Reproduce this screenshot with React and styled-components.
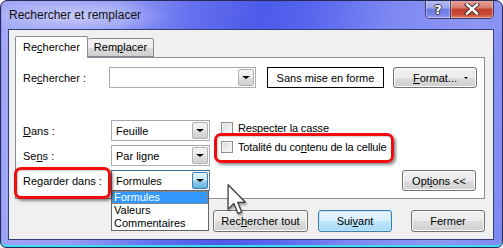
import React from "react";
import styled, { createGlobalStyle } from "styled-components";

const GlobalStyle = createGlobalStyle`
  html, body { margin: 0; padding: 0; background: #ffffff; }
  body { font-family: "Liberation Sans", Arial, sans-serif; }
  * { box-sizing: border-box; }
`;

const Window = styled.div`
  position: relative;
  width: 503px;
  height: 248px;
  border: 1px solid #262a55;
  border-radius: 7px 7px 6px 6px;
  background:
    radial-gradient(ellipse 95px 18px at 75px 15px, rgba(255,255,255,0.45), rgba(255,255,255,0) 100%),
    linear-gradient(100deg, #a3a9f5 0%, #939bf4 22%, #6571ef 35%, #4b5ae9 48%, #5867ee 58%, #7d88f2 72%, #8e97f3 88%, #7e89f1 100%);
  box-shadow: inset 0 -2px 0 #3fdaf4, inset 1px 0 0 #8c96f6;
  display: flex;
  flex-direction: column;
  overflow: hidden;
`;

const TitleBar = styled.div`
  height: 28px;
  display: flex;
  align-items: flex-start;
  padding-left: 8px;
`;

const Title = styled.div`
  padding-top: 6px;
  line-height: 16px;
  font-size: 12px;
  color: #101010;
`;

const Controls = styled.div`
  margin-left: auto;
  margin-right: 8px;
  margin-top: -1px;
  display: flex;
  height: 19px;
  border: 1px solid #3a3f6a;
  border-top: none;
  border-radius: 0 0 5px 5px;
  overflow: hidden;
`;

const CtrlButton = styled.div`
  width: ${(p) => p.$w}px;
  height: 100%;
  display: flex;
  align-items: center;
  justify-content: center;
  background: ${(p) =>
    p.$close
      ? "linear-gradient(#e9a79c 0%, #d77a6c 45%, #c5402e 50%, #c84a36 80%, #e1806a 100%)"
      : "linear-gradient(#b9bff6 0%, #9ca4f0 45%, #6e7be6 50%, #7884e8 80%, #9aa2ef 100%)"};
  border-left: ${(p) => (p.$close ? "1px solid #4a3a5a" : "none")};
  box-shadow: inset 0 0 0 1px rgba(255,255,255,0.35);
`;

const HelpGlyph = styled.span`
  font-family: "DejaVu Sans", sans-serif;
  font-weight: bold;
  font-size: 13px;
  color: #ffffff;
  line-height: 1;
  text-shadow: 1px 0 0 #333, -1px 0 0 #333, 0 1px 0 #333, 0 -1px 0 #333;
`;

const Client = styled.div`
  flex: 1;
  margin: 0 8px 7px 7px;
  border: 1px solid #353d7a;
  background: #f0f0f0;
  padding: 6px 8px 0 6px;
  display: flex;
  flex-direction: column;
`;

const TabStrip = styled.div`
  display: flex;
  align-items: flex-end;
  height: 21px;
  position: relative;
  z-index: 1;
`;

const Tab = styled.div`
  height: ${(p) => (p.$active ? 22 : 19)}px;
  margin-bottom: ${(p) => (p.$active ? -1 : 0)}px;
  padding: ${(p) => (p.$active ? "4px 7px 0 7px" : "2px 6px 0 6px")};
  font-size: 11px;
  line-height: 13px;
  color: #000;
  border: 1px solid #898c95;
  border-bottom: ${(p) => (p.$active ? "none" : "1px solid #898c95")};
  border-left: ${(p) => (p.$first ? "1px solid #898c95" : "none")};
  background: ${(p) =>
    p.$active ? "#ffffff" : "linear-gradient(#f3f3f3 0%, #ebebeb 50%, #dddddd 51%, #cfcfcf 100%)"};
  border-radius: 2px 2px 0 0;
`;

const U = styled.span`
  text-decoration: underline;
  text-underline-offset: 1px;
`;

const Panel = styled.div`
  background: #ffffff;
  border: 1px solid #898c95;
  padding: 9px 7px 7px 7px;
  display: flex;
  flex-direction: column;
`;

const TopRow = styled.div`
  display: flex;
  align-items: center;
  height: 21px;
`;

const Label = styled.div`
  width: ${(p) => p.$w}px;
  flex-shrink: 0;
  font-size: 11px;
  color: #000;
  white-space: nowrap;
`;

const Combo = styled.div`
  position: relative;
  width: ${(p) => p.$w}px;
  height: 21px;
  border: 1px solid ${(p) => (p.$focus ? "#5c7ea0" : "#abadb3")};
  border-top-color: ${(p) => (p.$focus ? "#3c6a94" : "#a5a7ad")};
  background: #ffffff;
  display: flex;
  align-items: center;
  padding-left: 4px;
  font-size: 11px;
  color: #000;
`;

const ComboArrow = styled.div`
  position: absolute;
  top: 1px;
  right: 1px;
  bottom: 1px;
  width: 16px;
  border: 1px solid ${(p) => (p.$focus ? "#3c7fb1" : "#b0b0b0")};
  border-radius: 2px;
  background: ${(p) =>
    p.$focus
      ? "linear-gradient(#e5f4fc 0%, #c4e5f6 50%, #98d1ef 51%, #68b3db 100%)"
      : "linear-gradient(#f4f4f4 0%, #ececec 50%, #dedede 51%, #d2d2d2 100%)"};
  display: flex;
  align-items: center;
  justify-content: center;
`;

const Tri = styled.div`
  width: 0;
  height: 0;
  border-left: ${(p) => p.$s}px solid transparent;
  border-right: ${(p) => p.$s}px solid transparent;
  border-top: ${(p) => p.$s - 0.5}px solid #000;
`;

const FormatBox = styled.div`
  margin-left: 11px;
  width: 117px;
  height: 21px;
  border: 1px solid #000;
  background: #ffffff;
  display: flex;
  align-items: center;
  justify-content: center;
  font-size: 11px;
  color: #000;
`;

const Button = styled.div`
  width: ${(p) => p.$w}px;
  height: ${(p) => p.$h || 21}px;
  margin-left: ${(p) => p.$ml || 0}px;
  border: 1px solid ${(p) => (p.$default ? "#3c7fb1" : "#707070")};
  border-radius: 3px;
  background: ${(p) =>
    p.$default
      ? "linear-gradient(#eaf6fd 0%, #d9f0fc 50%, #bee6fd 51%, #a7d9f5 100%)"
      : "linear-gradient(#f2f2f2 0%, #ebebeb 50%, #dddddd 51%, #cfcfcf 100%)"};
  box-shadow: inset 0 0 0 1px ${(p) => (p.$default ? "#bfe6fb" : "#fcfcfc")};
  display: flex;
  align-items: center;
  justify-content: ${(p) => (p.$split ? "space-between" : "center")};
  padding: ${(p) => (p.$split ? "0 8px 0 19px" : "0")};
  font-size: 11px;
  color: #000;
  flex-shrink: 0;
`;

const Lower = styled.div`
  margin-top: 32px;
  display: flex;
  align-items: flex-start;
`;

const LeftGroup = styled.div`
  display: flex;
  flex-direction: column;
  gap: 4px;
`;

const FieldRow = styled.div`
  display: flex;
  align-items: center;
  height: 21px;
`;

const CheckGroup = styled.div`
  margin-left: 11px;
  margin-top: 1px;
  display: flex;
  flex-direction: column;
  gap: 6px;
`;

const CheckRow = styled.div`
  display: flex;
  align-items: center;
  height: 13px;
  font-size: 11px;
  letter-spacing: -0.15px;
  color: #000;
  white-space: nowrap;
`;

const CheckBox = styled.div`
  width: 12px;
  height: 12px;
  margin-right: 5px;
  border: 1px solid #8e8f8f;
  background: linear-gradient(135deg, #d8d8d8 0%, #eeeeee 60%, #fbfbfb 100%);
  box-shadow: inset 0 0 0 1px #f4f4f4;
`;

const OptionsButton = styled(Button)`
  margin-left: auto;
  margin-right: 1px;
  align-self: flex-end;
`;

const ListBox = styled.div`
  position: absolute;
  top: 100%;
  left: -1px;
  width: calc(100% + 1px);
  border: 1px solid #646464;
  background: #ffffff;
  z-index: 5;
`;

const ListItem = styled.div`
  height: 13px;
  line-height: 12px;
  padding-left: 2px;
  font-size: 11px;
  color: ${(p) => (p.$sel ? "#ffffff" : "#000")};
  background: ${(p) => (p.$sel ? "#3399ff" : "transparent")};
  outline: ${(p) => (p.$sel ? "1px dotted #c87832" : "none")};
  outline-offset: -1px;
`;

const ButtonRow = styled.div`
  margin-top: 11px;
  display: flex;
  justify-content: flex-end;
`;

const Annotation = styled.div`
  position: absolute;
  left: ${(p) => p.$x}px;
  top: ${(p) => p.$y}px;
  width: ${(p) => p.$w}px;
  height: ${(p) => p.$h}px;
  border: 3px solid #f00c0c;
  border-radius: 7px;
  box-shadow: 2px 2px 3px rgba(0, 0, 0, 0.45), inset 1px 1px 2px rgba(0, 0, 0, 0.2);
  pointer-events: none;
  z-index: 10;
`;

const Cursor = styled.svg`
  position: absolute;
  left: 226px;
  top: 183px;
  z-index: 20;
  filter: drop-shadow(1px 2px 1px rgba(0, 0, 0, 0.35));
`;

function Dropdown({ w, value, focus, children }) {
  return (
    <Combo $w={w} $focus={focus}>
      {value}
      <ComboArrow $focus={focus}>
        <Tri $s={4} />
      </ComboArrow>
      {children}
    </Combo>
  );
}

export default function App() {
  return (
    <>
      <GlobalStyle />
      <Window>
        <TitleBar>
          <Title>Rechercher et remplacer</Title>
          <Controls>
            <CtrlButton $w={24}>
              <HelpGlyph>?</HelpGlyph>
            </CtrlButton>
            <CtrlButton $w={43} $close>
              <svg width="16" height="12" viewBox="0 0 16 12">
                <path
                  d="M3 1.5 L13 10.5 M13 1.5 L3 10.5"
                  stroke="#3a2a2a"
                  strokeWidth="4.2"
                  strokeLinecap="square"
                />
                <path
                  d="M3 1.5 L13 10.5 M13 1.5 L3 10.5"
                  stroke="#ffffff"
                  strokeWidth="2.4"
                  strokeLinecap="square"
                />
              </svg>
            </CtrlButton>
          </Controls>
        </TitleBar>
        <Client>
          <TabStrip>
            <Tab $active $first>
              Re<U>c</U>hercher
            </Tab>
            <Tab>
              Rem<U>p</U>lacer
            </Tab>
          </TabStrip>
          <Panel>
            <TopRow>
              <Label $w={86}>
                Re<U>c</U>hercher :
              </Label>
              <Dropdown w={147} value="" />
              <FormatBox>Sans mise en forme</FormatBox>
              <Button $w={84} $ml={9} $split>
                <span>
                  <U>F</U>ormat...
                </span>
                <Tri $s={2.5} />
              </Button>
            </TopRow>
            <Lower>
              <LeftGroup>
                <FieldRow>
                  <Label $w={88}>
                    <U>D</U>ans :
                  </Label>
                  <Dropdown w={99} value="Feuille" />
                </FieldRow>
                <FieldRow>
                  <Label $w={88}>
                    Se<U>n</U>s :
                  </Label>
                  <Dropdown w={99} value="Par ligne" />
                </FieldRow>
                <FieldRow>
                  <Label $w={88}>
                    Re<U>g</U>arder dans :
                  </Label>
                  <Dropdown w={99} value="Formules" focus>
                    <ListBox>
                      <ListItem $sel>Formules</ListItem>
                      <ListItem>Valeurs</ListItem>
                      <ListItem>Commentaires</ListItem>
                    </ListBox>
                  </Dropdown>
                </FieldRow>
              </LeftGroup>
              <CheckGroup>
                <CheckRow>
                  <CheckBox />
                  Respecter la casse
                </CheckRow>
                <CheckRow>
                  <CheckBox />
                  Totalité du co<U>n</U>tenu de la cellule
                </CheckRow>
              </CheckGroup>
              <OptionsButton $w={74}>
                Opt<U>i</U>ons &lt;&lt;
              </OptionsButton>
            </Lower>
          </Panel>
          <ButtonRow>
            <Button $w={95} $h={22}>
              Rec<U>h</U>ercher tout
            </Button>
            <Button $w={74} $h={22} $ml={10} $default>
              Sui<U>v</U>ant
            </Button>
            <Button $w={74} $h={22} $ml={19}>
              Fermer
            </Button>
          </ButtonRow>
        </Client>
        <Annotation $x={13} $y={166} $w={97} $h={32} />
        <Annotation $x={213} $y={132} $w={180} $h={30} />
        <Cursor width="22" height="32" viewBox="0 0 14 21">
          <path
            d="M0.5 0.5 L0.5 16.5 L4.3 12.8 L7 19.3 L9.4 18.3 L6.8 12 L11.8 12 Z"
            fill="#ffffff"
            stroke="#3a3a3a"
            strokeWidth="0.8"
            strokeLinejoin="round"
          />
        </Cursor>
      </Window>
    </>
  );
}
